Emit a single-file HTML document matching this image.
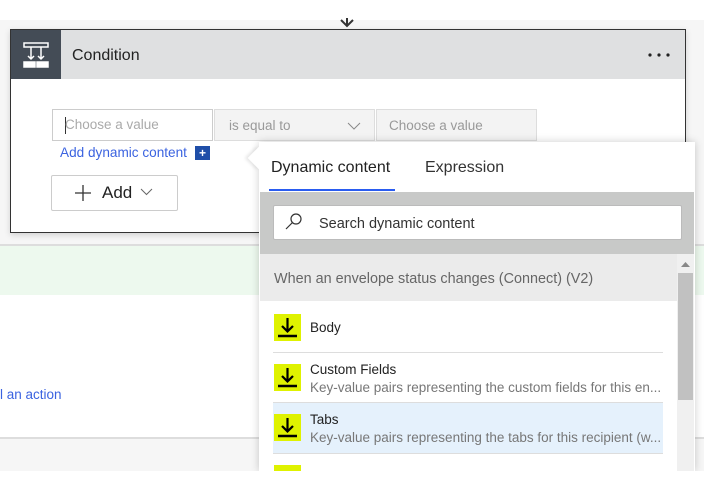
<!DOCTYPE html>
<html><head><style>
*{margin:0;padding:0;box-sizing:border-box}
body{width:704px;height:491px;overflow:hidden;background:#fff;font-family:"Segoe UI","Liberation Sans",sans-serif;position:relative}
.abs{position:absolute}
</style></head><body>
<div class="abs" style="left:0;top:20px;width:704px;height:451px;background:#f6f6f6"></div>
<div class="abs" style="left:0;top:244px;width:704px;height:2px;background:#ddd"></div>
<div class="abs" style="left:0;top:246px;width:704px;height:49px;background:#edf9ee"></div>
<div class="abs" style="left:0;top:295px;width:704px;height:142px;background:#fff"></div>
<div class="abs" style="left:0;top:437px;width:704px;height:2px;background:#ddd"></div>
<div class="abs" style="left:0;top:387px;font-size:13.5px;color:#3b63e0">l an action</div>
<svg class="abs" style="left:339px;top:18px" width="16" height="12"><path d="M2 2 L8 8 L14 2" stroke="#333" stroke-width="2" fill="none"/><path d="M8 0 V8" stroke="#333" stroke-width="2"/></svg>
<div class="abs" style="left:10px;top:29px;width:676px;height:204px;background:#fff;border:1px solid #333;box-shadow:0 2px 6px rgba(0,0,0,.15)"></div>
<div class="abs" style="left:11px;top:30px;width:674px;height:49px;background:#dfe0e1"></div>
<div class="abs" style="left:11px;top:30px;width:50px;height:49px;background:#444c56"></div>
<svg class="abs" style="left:22px;top:41px" width="28" height="28" fill="none" stroke="#fff" stroke-width="1.5"><rect x="2" y="2" width="24" height="4"/><path d="M9 6V18M19 6V18M6 15L9 18L12 15M16 15L19 18L22 15"/><rect x="2" y="21" width="11" height="5" fill="#fff"/><rect x="15" y="21" width="11" height="5" fill="#fff"/></svg>
<div class="abs" style="left:72px;top:47px;font-size:16px;color:#222">Condition</div>
<svg class="abs" style="left:647px;top:52px" width="24" height="6"><circle cx="3" cy="3" r="1.6" fill="#222"/><circle cx="12" cy="3" r="1.6" fill="#222"/><circle cx="21" cy="3" r="1.6" fill="#222"/></svg>
<div class="abs" style="left:52px;top:109px;width:161px;height:32px;border:1px solid #ccc;background:#fff"></div>
<div class="abs" style="left:65px;top:117px;width:1px;height:17px;background:#333"></div>
<div class="abs" style="left:65px;top:117px;font-size:13.5px;color:#aaa">Choose a value</div>
<div class="abs" style="left:214px;top:109px;width:161px;height:32px;border:1px solid #ddd;background:#f3f3f3"></div>
<div class="abs" style="left:229px;top:118px;font-size:13.5px;color:#999">is equal to</div>
<svg class="abs" style="left:347px;top:122px" width="14" height="8"><path d="M1 1L7 7L13 1" stroke="#888" fill="none"/></svg>
<div class="abs" style="left:376px;top:109px;width:161px;height:32px;border:1px solid #ddd;background:#f3f3f3"></div>
<div class="abs" style="left:389px;top:118px;font-size:13.5px;color:#999">Choose a value</div>
<div class="abs" style="left:60px;top:145px;font-size:13.6px;color:#3b63e0">Add dynamic content</div>
<div class="abs" style="left:195px;top:146px;width:15px;height:14px;background:#1f4ea8;color:#fff;font-size:12px;font-weight:bold;text-align:center;line-height:14px">+</div>
<div class="abs" style="left:51px;top:175px;width:127px;height:36px;border:1px solid #ccc;border-radius:2px;background:#fff"></div>
<svg class="abs" style="left:74px;top:184px" width="18" height="18"><path d="M9 1V17M1 9H17" stroke="#333" stroke-width="1.3"/></svg>
<div class="abs" style="left:102px;top:183px;font-size:17px;color:#222">Add</div>
<svg class="abs" style="left:140px;top:188px" width="13" height="8"><path d="M1 1L6.5 6.5L12 1" stroke="#666" fill="none"/></svg>
<div class="abs" style="left:259px;top:142px;width:436px;height:329px;background:#fff;box-shadow:0 0 8px rgba(0,0,0,.2)"></div>
<div class="abs" style="left:251px;top:150px;width:16px;height:16px;background:#fff;transform:rotate(45deg);box-shadow:-2px 2px 3px rgba(0,0,0,.1)"></div>
<div class="abs" style="left:259px;top:142px;width:436px;height:50px;background:#fff"></div>
<div class="abs" style="left:271px;top:159px;font-size:16px;color:#222">Dynamic content</div>
<div class="abs" style="left:425px;top:159px;font-size:16px;color:#333">Expression</div>
<div class="abs" style="left:269px;top:189px;width:126px;height:2px;background:#2a5cf0"></div>
<div class="abs" style="left:260px;top:192px;width:434px;height:62px;background:#c8c9c8"></div>
<div class="abs" style="left:273px;top:205px;width:409px;height:35px;background:#fff;border:1px solid #bbb;border-radius:2px"></div>
<svg class="abs" style="left:285px;top:213px" width="18" height="18" fill="none" stroke="#333" stroke-width="1.2"><circle cx="11" cy="6" r="5"/><path d="M7.5 9.5L1 16"/></svg>
<div class="abs" style="left:319px;top:216px;font-size:14.5px;color:#333">Search dynamic content</div>
<div class="abs" style="left:260px;top:254px;width:417px;height:47px;background:#ebebeb"></div>
<div class="abs" style="left:274px;top:271px;font-size:14.4px;color:#666">When an envelope status changes (Connect) (V2)</div>
<div class="abs" style="left:677px;top:254px;width:17px;height:217px;background:#f0f0f0"></div>
<svg class="abs" style="left:681px;top:261px" width="9" height="6"><path d="M0 6L4.5 1L9 6Z" fill="#888"/></svg>
<div class="abs" style="left:678px;top:273px;width:15px;height:127px;background:#c1c1c1"></div>
<div class="abs" style="left:273px;top:403px;width:390px;height:50px;background:#e5f1fc"></div>
<div class="abs" style="left:273px;top:352px;width:390px;height:1px;background:#ddd"></div>
<div class="abs" style="left:273px;top:402px;width:390px;height:1px;background:#ddd"></div>
<div class="abs" style="left:273px;top:453px;width:390px;height:1px;background:#ddd"></div>
<div class="abs" style="left:274px;top:314px;width:27px;height:27px;background:#dff200"></div>
<div class="abs" style="left:274px;top:364px;width:27px;height:27px;background:#dff200"></div>
<div class="abs" style="left:274px;top:414px;width:27px;height:27px;background:#dff200"></div>
<div class="abs" style="left:274px;top:465px;width:27px;height:6px;background:#dff200"></div>
<svg class="abs" style="left:274px;top:314px" width="27" height="27"><path d="M13.5 4V17M8 12L13.5 17.5L19 12" stroke="#000" stroke-width="2.2" fill="none"/><path d="M4 22H23" stroke="#000" stroke-width="2.5"/></svg>
<svg class="abs" style="left:274px;top:364px" width="27" height="27"><path d="M13.5 4V17M8 12L13.5 17.5L19 12" stroke="#000" stroke-width="2.2" fill="none"/><path d="M4 22H23" stroke="#000" stroke-width="2.5"/></svg>
<svg class="abs" style="left:274px;top:414px" width="27" height="27"><path d="M13.5 4V17M8 12L13.5 17.5L19 12" stroke="#000" stroke-width="2.2" fill="none"/><path d="M4 22H23" stroke="#000" stroke-width="2.5"/></svg>
<div class="abs" style="left:310px;top:320px;font-size:13.5px;color:#222">Body</div>
<div class="abs" style="left:310px;top:362px;font-size:13.5px;color:#222">Custom Fields</div>
<div class="abs" style="left:310px;top:380px;font-size:13.5px;color:#777;white-space:nowrap">Key-value pairs representing the custom fields for this en...</div>
<div class="abs" style="left:310px;top:412px;font-size:13.5px;color:#222">Tabs</div>
<div class="abs" style="left:310px;top:430px;font-size:13.5px;color:#777;white-space:nowrap">Key-value pairs representing the tabs for this recipient (w...</div>
<div class="abs" style="left:0;top:471px;width:704px;height:20px;background:#fff"></div>
</body></html>
